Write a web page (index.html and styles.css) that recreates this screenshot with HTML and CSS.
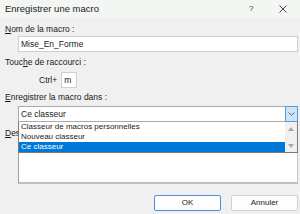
FILE: index.html
```html
<!DOCTYPE html>
<html lang="fr">
<head>
  <meta charset="UTF-8">
  <meta name="viewport" content="width=device-width, initial-scale=1.0">
  <title>Enregistrer une macro</title>
  <link rel="stylesheet" href="styles.css">
</head>
<body>
  <div class="dialog">
    <div class="titlebar">
      <span class="title">Enregistrer une macro</span>
      <span class="help">?</span>
      <span class="close">
        <svg width="8" height="8" viewBox="0 0 8 8"><path d="M0.5 0.5 L7.5 7.5 M7.5 0.5 L0.5 7.5" stroke="#333" stroke-width="0.9" fill="none"/></svg>
      </span>
    </div>

    <div class="content">
      <div class="label"><u>N</u>om de la macro :</div>
      <div class="field name">Mise_En_Forme</div>

      <div class="label">Touc<u>h</u>e de raccourci :</div>
      <div class="shortcut">
        <span>Ctrl+</span>
        <span class="key">m</span>
      </div>

      <div class="label"><u>E</u>nregistrer la macro dans :</div>
      <div class="combo">
        <div class="field select">
          <span>Ce classeur</span>
          <span class="drop">
            <svg width="7" height="4" viewBox="0 0 7 4"><path d="M0.5 0.5 L3.5 3.3 L6.5 0.5" stroke="#555" stroke-width="0.9" fill="none"/></svg>
          </span>
        </div>
        <div class="list">
          <ul class="items">
            <li>Classeur de macros personnelles</li>
            <li>Nouveau classeur</li>
            <li class="active">Ce classeur</li>
          </ul>
          <div class="scrollbar">
            <svg width="6" height="4" viewBox="0 0 6 4"><path d="M0 4 L3 0 L6 4 Z" fill="#a8a8a8"/></svg>
            <svg width="6" height="4" viewBox="0 0 6 4"><path d="M0 0 L3 4 L6 0 Z" fill="#a8a8a8"/></svg>
          </div>
        </div>
      </div>

      <!-- covered by the open list, only "Des" shows -->
      <div class="label label-hidden"><u>D</u>escription :</div>
      <div class="textarea"></div>

      <div class="buttons">
        <button class="btn btn-default">OK</button>
        <button class="btn">Annuler</button>
      </div>
    </div>
  </div>
</body>
</html>
```

FILE: styles.css
```css
body {
  margin: 0;
  background: #f0f0f0;
  font-family: "Liberation Sans", Arial, sans-serif;
  font-size: 8.5px;
  color: #1a1a1a;
}

.dialog {
  width: 300px;
  height: 214px;
  overflow: hidden;
}

.titlebar {
  display: flex;
  align-items: center;
  height: 17px;
  background: #f3f6f3;
  padding-left: 5px;
}

.titlebar .title {
  flex: 1;
  font-size: 9.5px;
  color: #222;
}

.titlebar .help {
  width: 10px;
  font-size: 8px;
  color: #333;
  margin-right: 20px;
}

.titlebar .close {
  display: flex;
  margin-right: 13px;
}

.content {
  padding: 6px 2px 0 5px;
}

.label {
  height: 12px;
  line-height: 12px;
}

.label-hidden {
  width: 13px;
  overflow: hidden;
  white-space: nowrap;
}

.field {
  margin-left: 13px;
  height: 16px;
  box-sizing: border-box;
  border: 1px solid #cfcfcf;
  background: #fff;
  padding-left: 2px;
  line-height: 14px;
}

.field.name {
  margin-top: 1px;
  margin-bottom: 4px;
}

.shortcut {
  display: flex;
  align-items: center;
  gap: 4px;
  margin: 4px 0 3px 34px;
}

.shortcut .key {
  width: 16px;
  height: 16px;
  box-sizing: border-box;
  border: 1px solid #cfcfcf;
  background: #fff;
  padding-left: 2px;
  line-height: 14px;
}

.combo {
  position: relative;
  margin: 3px 0 5px;
}

.select {
  display: flex;
  align-items: center;
  justify-content: space-between;
  border-color: #aaa;
}

.select .drop {
  display: flex;
  align-items: center;
  justify-content: center;
  width: 13px;
  height: 16px;
  margin: -1px -1px -1px 0;
  box-sizing: border-box;
  border: 1px solid #5b9bd5;
  background: #cce4f7;
}

.list {
  position: absolute;
  top: 16px;
  left: 13px;
  right: 0;
  height: 31px;
  display: flex;
  background: #fff;
  border: 1px solid #7a7a7a;
  border-top: none;
  box-sizing: border-box;
  z-index: 10;
}

.items {
  flex: 1;
  list-style: none;
  margin: 0;
  padding: 0;
  font-size: 8px;
}

.items > li {
  height: 10px;
  line-height: 10px;
  padding-left: 2px;
}

.items > li.active {
  background: #0078d7;
  color: #fff;
}

.scrollbar {
  width: 12px;
  background: #f0f0f0;
  display: flex;
  flex-direction: column;
  align-items: center;
  justify-content: space-between;
  padding: 5px 0 4px;
  box-sizing: border-box;
}

.textarea {
  margin: 2px 0 0 13px;
  height: 40px;
  background: #fff;
  border: 1px solid #c8c8c8;
  border-left-color: #a0a0a0;
  border-bottom: 2px solid #c0c0c0;
}

.buttons {
  display: flex;
  justify-content: flex-end;
  gap: 10px;
  margin-top: 11px;
}

.btn {
  width: 67px;
  height: 16px;
  padding: 0;
  font: inherit;
  font-size: 8px;
  line-height: 14px;
  color: #222;
  background: #fdfdfd;
  border: 1px solid #d0d0d0;
  border-radius: 2px;
}

.btn-default {
  border-color: #4a8fd9;
}
```
